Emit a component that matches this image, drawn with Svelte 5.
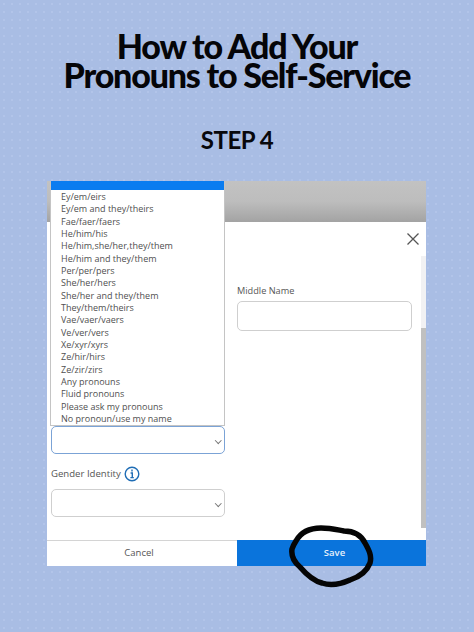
<script>
	const pronouns = [
		'Ey/em/eirs',
		'Ey/em and they/theirs',
		'Fae/faer/faers',
		'He/him/his',
		'He/him,she/her,they/them',
		'He/him and they/them',
		'Per/per/pers',
		'She/her/hers',
		'She/her and they/them',
		'They/them/theirs',
		'Vae/vaer/vaers',
		'Ve/ver/vers',
		'Xe/xyr/xyrs',
		'Ze/hir/hirs',
		'Ze/zir/zirs',
		'Any pronouns',
		'Fluid pronouns',
		'Please ask my pronouns',
		'No pronoun/use my name'
	];
</script>

<div class="page">
	<h1>How to Add Your<br />Pronouns to Self-Service</h1>
	<h2>STEP 4</h2>

	<div class="modal">
		<div class="modal_top"></div>
		<div class="modal_body">
			<svg class="close" viewBox="0 0 12 12" width="12" height="12" aria-hidden="true">
				<path d="M.5.5l11 11M11.5.5l-11 11" stroke="#555" stroke-width="1.3" fill="none" />
			</svg>
			<div class="scrollbar"><div class="thumb"></div></div>

			<div class="left_col">
				<div class="select focused"><span class="chevron"></span></div>
				<div class="label gender">
					Gender Identity
					<svg viewBox="0 0 16 16" width="16" height="16" aria-hidden="true">
						<circle cx="8" cy="8" r="6.8" fill="none" stroke="#1f6db5" stroke-width="1.4" />
						<path d="M8 3.6v1.8M6.6 7h1.7v4.2M6.4 11.6h3.4" fill="none" stroke="#1f6db5" stroke-width="1.4" />
					</svg>
				</div>
				<div class="select"><span class="chevron"></span></div>
			</div>

			<div class="right_col">
				<div class="label">Middle Name</div>
				<div class="input"></div>
			</div>
		</div>
		<div class="modal_footer">
			<div class="cancel">Cancel</div>
			<div class="save">Save</div>
		</div>

		<div class="dropdown">
			<div class="dropdown_selected"></div>
			{#each pronouns as item}
				<div class="dropdown_item">{item}</div>
			{/each}
		</div>

		<svg class="ring" viewBox="0 0 90 64" width="90" height="64" aria-hidden="true">
			<path
				d="M8 16C13 7 22 3 33 3C43 3 50 5 56 6C66 6 73 10 77 18C81 25 84 31 82 38C79 46 71 52 62 55C53 59 43 61 34 58C26 56 18 49 12 42C6 37 3 31 4 24C5 21 6 19 8 16Z"
				fill="none"
				stroke="#050505"
				stroke-width="5.5"
				stroke-linejoin="round"
			/>
		</svg>
	</div>
</div>

<style>
	:global(body) {
		margin: 0;
		background: #a9bde6;
	}
	.page {
		width: 474px;
		height: 632px;
		box-sizing: border-box;
		overflow: hidden;
		padding-top: 31px;
		display: flex;
		flex-direction: column;
		align-items: center;
		background-color: #a9bde4;
		background-image: radial-gradient(circle, #b2c4e9 1px, transparent 1.4px);
		background-size: 8px 8px;
		font-family: 'Open Sans', 'Noto Sans', sans-serif;
	}
	h1 {
		margin: 0;
		font-family: Lato, sans-serif;
		font-weight: 900;
		font-size: 34px;
		line-height: 29px;
		letter-spacing: -1.2px;
		text-align: center;
		color: #050508;
	}
	h2 {
		margin: 37px 0 0;
		font-family: Lato, sans-serif;
		font-weight: 700;
		font-size: 24px;
		line-height: 28px;
		letter-spacing: -0.5px;
		color: #08080c;
	}
	.modal {
		position: relative;
		align-self: flex-start;
		margin: 27px 0 0 47px;
		width: 379px;
		display: flex;
		flex-direction: column;
	}
	.modal_top {
		height: 41px;
		background: linear-gradient(#c2c2c2 0%, #bdbdbd 50%, #a3a3a3 100%);
	}
	.modal_body {
		position: relative;
		height: 318px;
		background: #fff;
		display: grid;
		grid-template-columns: 178px 175px;
		column-gap: 8px;
		padding-left: 4px;
	}
	.close {
		position: absolute;
		top: 11px;
		right: 7px;
	}
	.scrollbar {
		position: absolute;
		top: 34px;
		right: 0;
		width: 5px;
		height: 272px;
		background: #f1f1f3;
		display: flex;
		align-items: flex-end;
	}
	.thumb {
		width: 100%;
		height: 200px;
		background: #c0c0c0;
	}
	.left_col {
		padding-top: 204px;
		width: 174px;
	}
	.right_col {
		padding-top: 62px;
	}
	.label {
		font-size: 9.2px;
		font-weight: 500;
		line-height: 14px;
		color: #555;
		margin-bottom: 3px;
	}
	.gender {
		display: flex;
		align-items: center;
		gap: 3px;
		font-size: 9.6px;
		font-weight: 400;
		line-height: 16px;
		margin: 12px 0 7px;
	}
	.select {
		position: relative;
		box-sizing: border-box;
		height: 28px;
		border: 1px solid #cfcfcf;
		border-radius: 5px;
		background: #fff;
	}
	.select.focused {
		border-color: #7ba3d6;
	}
	.chevron {
		position: absolute;
		right: 4px;
		top: 11px;
		width: 3.5px;
		height: 3.5px;
		border-right: 1px solid #777;
		border-bottom: 1px solid #777;
		transform: rotate(45deg);
	}
	.input {
		box-sizing: border-box;
		height: 30px;
		border: 1px solid #cfcfcf;
		border-radius: 5px;
	}
	.modal_footer {
		display: grid;
		grid-template-columns: 190px 189px;
		height: 26px;
		font-size: 9.5px;
		line-height: 26px;
		text-align: center;
	}
	.cancel {
		box-sizing: border-box;
		background: #fff;
		border-top: 1px solid #d4d4d4;
		color: #555;
		line-height: 24px;
		padding-right: 6px;
	}
	.save {
		background: #0a74dc;
		color: #e6f0fb;
		font-weight: 600;
		padding-left: 6px;
	}
	.dropdown {
		position: absolute;
		top: 0;
		left: 3px;
		width: 175px;
		height: 245px;
		box-sizing: border-box;
		background: #fff;
		border: 1px solid #c4c4c4;
		border-top: 0;
		overflow: hidden;
	}
	.dropdown_selected {
		height: 9px;
		margin: 0 -1px 1px;
		background: #0a7cf0;
	}
	.dropdown_item {
		padding-left: 10px;
		font-size: 9px;
		line-height: 12.33px;
		color: #4f4f4f;
		white-space: nowrap;
	}
	.ring {
		position: absolute;
		left: 241px;
		top: 344px;
	}
</style>
